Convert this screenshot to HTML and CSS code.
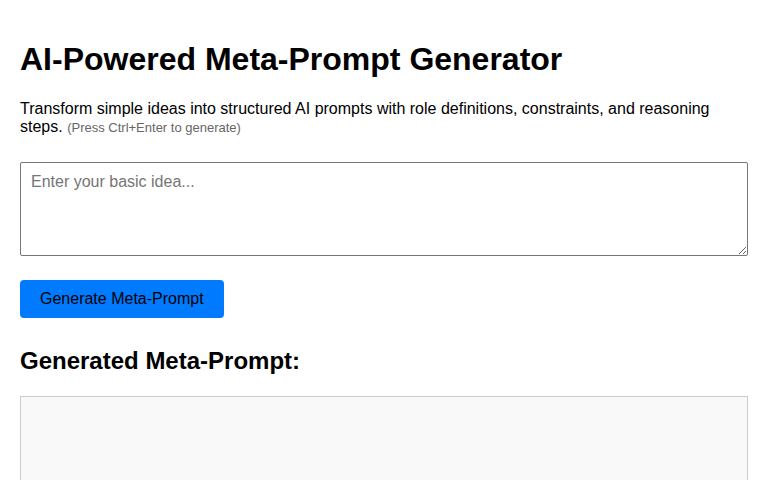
FILE: index.html
```html
<!DOCTYPE html>
<html lang="en">
<head>
<meta charset="utf-8">
<title>AI-Powered Meta-Prompt Generator</title>
<link rel="stylesheet" href="styles.css">
</head>
<body>
<main class="page">
  <h1 class="title">AI-Powered Meta-Prompt Generator</h1>
  <p class="intro">Transform simple ideas into structured AI prompts with role definitions, constraints, and reasoning steps. <span class="hint">(Press Ctrl+Enter to generate)</span></p>
  <textarea class="idea" placeholder="Enter your basic idea..."></textarea>
  <button class="generate" type="button">Generate Meta-Prompt</button>
  <h2 class="subtitle">Generated Meta-Prompt:</h2>
  <div class="output"></div>
</main>
</body>
</html>
```
FILE: styles.css
```css
html, body {
  margin: 0;
  padding: 0;
  background: #fff;
}
body {
  font-family: "Liberation Sans", Arial, sans-serif;
  color: #000;
}
.page {
  padding: 20px;
  display: flow-root;
}
.title {
  font-size: 32px;
  font-weight: bold;
  margin: 21px 0 0;
  line-height: 37px;
}
.intro {
  font-size: 16px;
  margin: 22px 0 0;
  line-height: normal;
}
.hint {
  font-size: 13px;
  line-height: 1;
  color: #666;
}
.idea {
  display: block;
  box-sizing: border-box;
  width: 100%;
  height: 94px;
  margin: 26px 0 0;
  padding: 10px;
  font-family: "Liberation Sans", Arial, sans-serif;
  font-size: 16px;
  border: 1px solid #767676;
  border-radius: 2px;
}
.idea::placeholder {
  color: #757575;
}
.generate {
  display: block;
  margin: 24px 0 0;
  height: 38px;
  padding: 0 20px;
  background: #007bff;
  color: #000;
  border: none;
  border-radius: 4px;
  font-family: "Liberation Sans", Arial, sans-serif;
  font-size: 16px;
}
.subtitle {
  font-size: 24px;
  font-weight: bold;
  line-height: 28px;
  margin: 29px 0 0;
}
.output {
  margin-top: 21px;
  min-height: 200px;
  background: #f9f9f9;
  border: 1px solid #ccc;
  padding: 15px;
}
```
